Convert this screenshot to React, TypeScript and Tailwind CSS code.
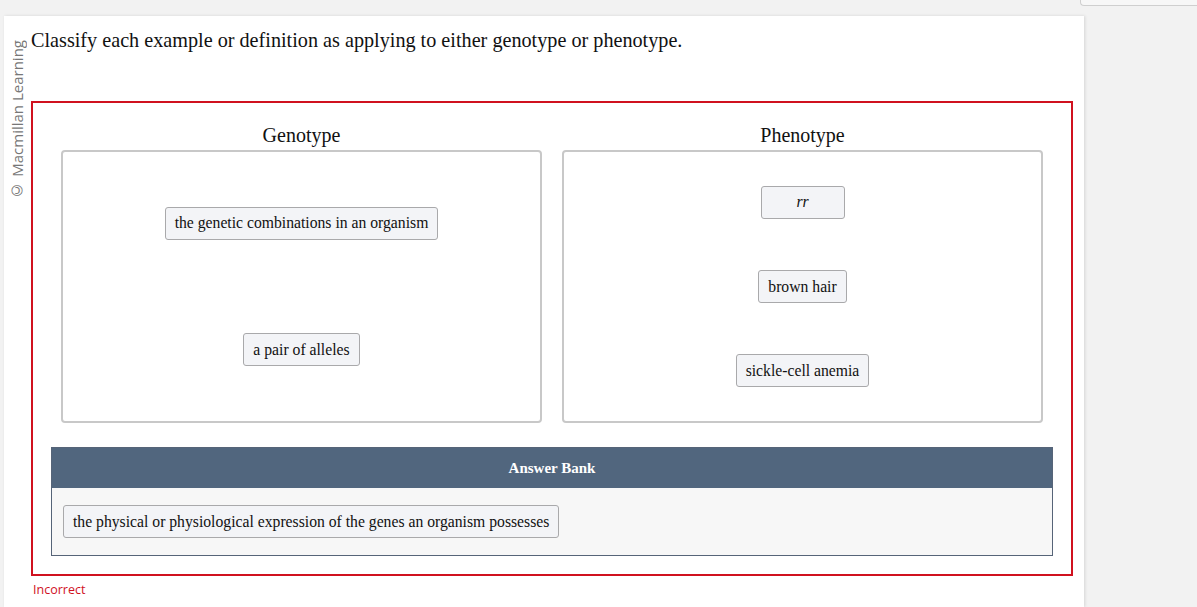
const serif = "font-['Liberation_Serif','Times_New_Roman',serif]";

function Chip({ children, italic }: { children: React.ReactNode; italic?: boolean }) {
  return (
    <div
      className={`min-w-[84px] h-[33px] px-[9px] flex items-center justify-center rounded-[3px] border border-[#a9a9ab] bg-[#f3f4f7] text-[15.7px] text-[#111] ${serif} ${italic ? 'italic' : ''}`}
    >
      {children}
    </div>
  );
}

function Bin({ title, items }: { title: string; items: { label: string; italic?: boolean }[] }) {
  return (
    <div className="flex-1 flex flex-col">
      <div className={`h-[47px] flex items-center justify-center pt-[16px] text-[20px] text-[#111] ${serif}`}>
        {title}
      </div>
      <div className="h-[273px] border-2 border-[#c8c8c8] rounded-[4px] py-2 flex flex-col">
        {items.map((it) => (
          <div key={it.label} className="flex-1 flex items-center justify-center">
            <Chip italic={it.italic}>{it.label}</Chip>
          </div>
        ))}
      </div>
    </div>
  );
}

export default function App() {
  return (
    <div className="min-h-screen bg-[#f2f2f2] relative overflow-hidden">
      {/* top right tab */}
      <div className="absolute top-0 left-[1080px] w-[140px] h-[6px] bg-[#f7f7f7] border-l border-b border-[#cfcfcf] rounded-bl-[4px]" />

      <div className="pl-1 pt-4">
        <div className="w-[1080px] h-[591px] bg-white shadow-[1px_0_3px_rgba(0,0,0,0.12)] flex">
          {/* vertical copyright */}
          <div className="w-[26px] flex items-start justify-center pt-[24px]">
            <span className="[writing-mode:vertical-rl] rotate-180 text-[15px] leading-none text-[#777] font-['Open_Sans','Liberation_Sans',sans-serif]">
              © Macmillan Learning
            </span>
          </div>

          <div className="flex-1 pl-[1px] pr-[11px]">
            <h1 className={`pt-[12px] text-[20.2px] leading-[25px] font-normal text-[#111] ${serif}`}>
              Classify each example or definition as applying to either genotype or phenotype.
            </h1>

            <div className="mt-[48px] h-[475px] border-2 border-[#d0111f] px-[18px]">
              <div className="flex gap-5 px-[10px]">
                <Bin
                  title="Genotype"
                  items={[
                    { label: 'the genetic combinations in an organism' },
                    { label: 'a pair of alleles' },
                  ]}
                />
                <Bin
                  title="Phenotype"
                  items={[
                    { label: 'rr', italic: true },
                    { label: 'brown hair' },
                    { label: 'sickle-cell anemia' },
                  ]}
                />
              </div>

              <div className="mt-[24px] border border-[#566478]">
                <div className={`h-[40px] bg-[#51667e] flex items-center justify-center text-white text-[15px] font-bold ${serif}`}>
                  Answer Bank
                </div>
                <div className="h-[67px] bg-[#f7f7f7] px-[11px] flex items-center">
                  <Chip>the physical or physiological expression of the genes an organism possesses</Chip>
                </div>
              </div>
            </div>

            <div className="pt-[5px] pl-[2px] text-[12.5px] text-[#d0111f] font-['Open_Sans','Liberation_Sans',sans-serif]">
              Incorrect
            </div>
          </div>
        </div>
      </div>
    </div>
  );
}
